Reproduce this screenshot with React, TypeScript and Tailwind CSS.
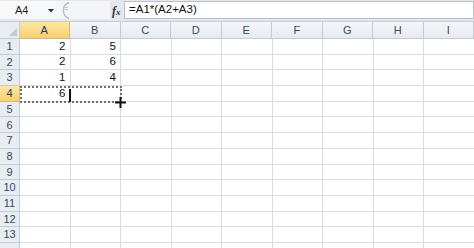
import React from "react";

const cols = ["A", "B", "C", "D", "E", "F", "G", "H", "I"];
const data: Record<string, string> = {
  "1A": "2", "1B": "5",
  "2A": "2", "2B": "6",
  "3A": "1", "3B": "4",
  "4A": "6",
};

export default function App() {
  const rows = Array.from({ length: 14 }, (_, i) => i + 1);
  return (
    <div className="w-[474px] h-[248px] overflow-hidden bg-white relative" style={{ fontFamily: '"Liberation Sans", Arial, sans-serif' }}>
      {/* formula bar */}
      <div className="h-[22px] bg-[#e4e8ee] flex items-stretch pt-[1px] pb-[2px] border-b border-[#c9ced6]">
        <div className="w-[56px] bg-[#f7f8fa] flex items-center pl-[15px] text-[11px] text-[#1e1e1e] relative">
          A4
          <svg className="absolute left-[48px] top-[8px]" width="6" height="4" viewBox="0 0 6 4"><path d="M0 0h6L3 3.5z" fill="#333" /></svg>
        </div>
        <div className="w-[54px] bg-[#f3f5f8] relative">
          <svg className="absolute left-[1px] top-[0px]" width="14" height="19" viewBox="0 0 14 19">
            <path d="M12 1.5 A 8.5 8.5 0 0 0 12 17.5" fill="none" stroke="#b7bec8" strokeWidth="1.5" />
            <path d="M8 6.5h3M8 8.5h3" stroke="#b0b6bf" strokeWidth="0.8" />
          </svg>
          <span className="absolute left-[56px] top-[1px] text-[12px] italic font-bold text-[#333]" style={{ fontFamily: '"Liberation Serif", serif' }}>f<span className="text-[9px]">x</span></span>
        </div>
        <div className="flex-1 bg-white border border-[#b9c0ca] ml-[14px] flex items-center pl-[4px] text-[11.5px] text-[#111]">
          =A1*(A2+A3)
        </div>
      </div>
      {/* header row */}
      <div className="flex h-[17px] bg-[#eef1f5]">
        <div className="w-[20px] border-r border-b border-[#c5cbd3] relative bg-[#e9ecf1]">
          <svg className="absolute right-[2px] bottom-[2px]" width="8" height="8" viewBox="0 0 8 8"><path d="M8 0V8H0z" fill="#c3c9d1" /></svg>
        </div>
        {cols.map((c) => (
          <div
            key={c}
            className={`w-[50.5px] shrink-0 flex items-center justify-center text-[11px] border-r border-b ${c === "A" ? "bg-gradient-to-b from-[#fbe7a4] to-[#f7cf6d] border-[#e2b85a] text-[#253b57]" : "bg-gradient-to-b from-[#f4f6f9] to-[#e6eaef] border-[#c5cbd3] text-[#344a66]"}`}
          >
            {c}
          </div>
        ))}
      </div>
      {/* rows */}
      {rows.map((r) => (
        <div key={r} className="flex h-[15.7px]">
          <div className={`w-[20px] shrink-0 flex items-center justify-center text-[11px] border-r border-b ${r === 4 ? "bg-gradient-to-b from-[#fbe7a4] to-[#f7cf6d] border-[#e2b85a] text-[#253b57]" : "bg-[#e9edf2] border-[#c5cbd3] text-[#344a66]"}`}>
            {r < 14 ? r : ""}
          </div>
          {cols.map((c) => (
            <div key={c} className="w-[50.5px] shrink-0 border-r border-b border-[#dadcdf] flex items-center justify-end pr-[4px] text-[11.5px] text-[#111]">
              {data[`${r}${c}`] ?? ""}
            </div>
          ))}
        </div>
      ))}
      {/* selection marquee */}
      <div className="absolute left-[20px] top-[86px] w-[102px] h-[17px] border-2 border-dotted border-[#707070]" />
      {/* I-beam in A4 */}
      <div className="absolute left-[69px] top-[89px] w-[2px] h-[13px] bg-[#111]" />
      {/* crosshair cursor */}
      <svg className="absolute left-[115px] top-[97px]" width="11" height="11" viewBox="0 0 11 11">
        <path d="M5.5 0v11M0 5.5h11" stroke="#111" strokeWidth="2" />
      </svg>
    </div>
  );
}
